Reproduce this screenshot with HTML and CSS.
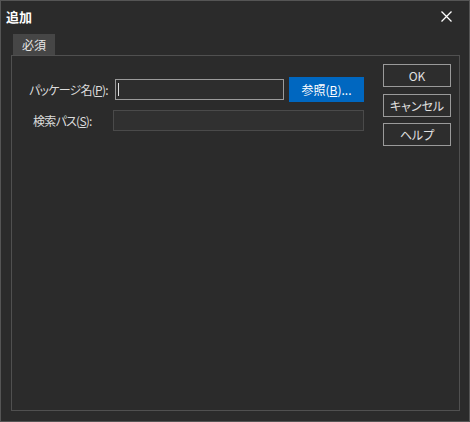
FILE: index.html
```html
<!DOCTYPE html>
<html lang="ja">
<head>
<meta charset="utf-8">
<title>追加</title>
<link rel="stylesheet" href="styles.css">
</head>
<body>
<div class="window">
  <div class="titlebar">
    <span class="title">追加</span>
    <svg class="close" width="11" height="11" viewBox="0 0 11 11"><path d="M0.5 0.5 L10.5 10.5 M10.5 0.5 L0.5 10.5" stroke="#ffffff" stroke-width="1.3" fill="none"/></svg>
  </div>
  <div class="tabs"><span class="tab">必須</span></div>
  <div class="panel">
    <div class="form">
      <div class="row row1">
        <span class="label label1">パッケージ名(<u>P</u>):</span>
        <div class="input active"><span class="caret"></span></div>
        <button class="browse">参照(<u>B</u>)...</button>
      </div>
      <div class="row row2">
        <span class="label label2">検索パス(<u>S</u>):</span>
        <div class="input disabled"></div>
      </div>
    </div>
    <div class="buttons">
      <button class="btn ok">OK</button>
      <button class="btn cancel">キャンセル</button>
      <button class="btn help">ヘルプ</button>
    </div>
  </div>
</div>
</body>
</html>
```
FILE: styles.css
```css
html, body {
  margin: 0;
  padding: 0;
  background: #2b2b2b;
}
.window {
  box-sizing: border-box;
  width: 470px;
  height: 422px;
  border: 1px solid #555555;
  background: #2b2b2b;
  font-family: "Noto Sans CJK JP", "Noto Sans", sans-serif;
  font-size: 12px;
  font-feature-settings: "palt";
  color: #dcdcdc;
  display: flex;
  flex-direction: column;
}
.titlebar {
  height: 33px;
  display: flex;
  align-items: center;
  justify-content: space-between;
  padding: 0 17px 0 5px;
}
.title {
  font-weight: bold;
  font-size: 13px;
  color: #ffffff;
  line-height: 1;
  margin-top: -2px;
  font-feature-settings: normal;
}
.close {
  display: block;
  margin-top: -2px;
}
.tabs {
  display: flex;
  padding-left: 12px;
  height: 21px;
}
.tab {
  width: 42px;
  height: 21px;
  background: #464646;
  color: #e6e6e6;
  font-size: 12px;
  display: flex;
  align-items: center;
  justify-content: center;
  line-height: 1;
  font-feature-settings: normal;
}
.panel {
  box-sizing: border-box;
  margin-left: 10px;
  width: 449px;
  height: 356px;
  border: 1px solid #505050;
  display: flex;
  align-items: flex-start;
}
.form {
  width: 371px;
  flex-shrink: 0;
  padding-top: 21px;
  display: flex;
  flex-direction: column;
  gap: 8px;
}
.row {
  display: flex;
  align-items: center;
}
.row1 {
  height: 25px;
}
.row2 {
  height: 21px;
}
.label {
  box-sizing: border-box;
  flex-shrink: 0;
  line-height: 1;
  white-space: nowrap;
  color: #dcdcdc;
  letter-spacing: -0.75px;
}
.label1 {
  padding-left: 17px;
  width: 103px;
}
.label2 {
  padding-left: 21px;
  width: 101px;
}
.input {
  box-sizing: border-box;
  flex-shrink: 0;
  height: 21px;
  display: flex;
  align-items: center;
}
.input.active {
  width: 169px;
  border: 1px solid #9b9b9b;
  background: #2d2d2d;
  padding-left: 2px;
}
.input.disabled {
  width: 251px;
  border: 1px solid #4a4a4a;
  background: #303030;
}
.caret {
  width: 1px;
  height: 13px;
  background: #e0e0e0;
}
.browse {
  flex-shrink: 0;
  margin-left: 5px;
  width: 75px;
  height: 25px;
  border: none;
  background: #0067c0;
  color: #ffffff;
  font-family: "Noto Sans CJK JP", "Noto Sans", sans-serif;
  font-size: 12px;
  padding: 0;
  line-height: 1;
}
.buttons {
  display: flex;
  flex-direction: column;
  padding-top: 8px;
}
.btn {
  box-sizing: border-box;
  width: 68px;
  height: 23px;
  border: 1px solid #9a9a9a;
  background: #2d2d2d;
  color: #e0e0e0;
  font-family: "Noto Sans CJK JP", "Noto Sans", sans-serif;
  font-size: 12px;
  font-feature-settings: "palt";
  padding: 0;
  line-height: 1;
}
.cancel {
  margin-top: 7px;
}
.help {
  margin-top: 6px;
}
```
